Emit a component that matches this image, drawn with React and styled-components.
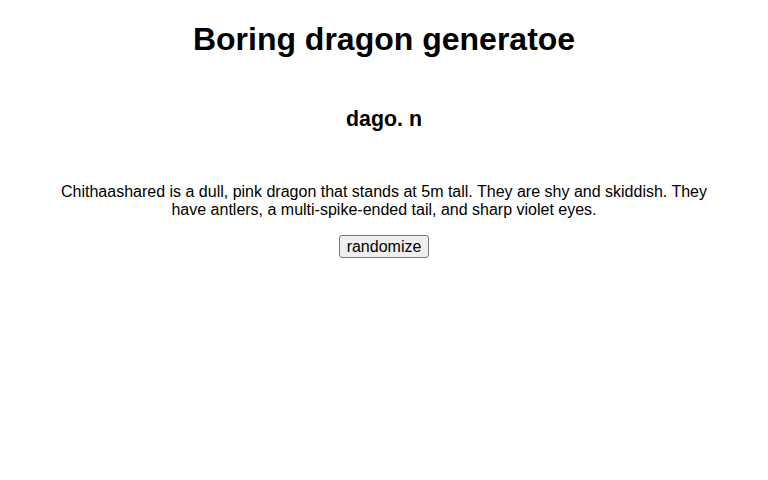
import styled, { createGlobalStyle } from "styled-components";

const GlobalStyle = createGlobalStyle`
  body {
    margin: 0;
    background: #ffffff;
    font-family: "Liberation Sans", Arial, sans-serif;
    color: #000000;
  }
`;

const Page = styled.main`
  padding: 0 8px;
  text-align: center;
`;

const Title = styled.h1`
  font-size: 32px;
  font-weight: bold;
  margin: 21px 0 0;
`;

const Name = styled.h2`
  font-size: 21.33px;
  font-weight: bold;
  margin: 49px 0 0;
`;

const Description = styled.p`
  font-size: 16px;
  line-height: 18px;
  margin: 51px 52px 16px;
`;

const Button = styled.button`
  font-family: "Liberation Sans", Arial, sans-serif;
  font-size: 16px;
  padding: 2px 7px 1px;
  color: #000;
  background: #efefef;
  border: 1px solid #767676;
  border-radius: 3px;
`;

function App() {
  return (
    <Page>
      <GlobalStyle />
      <Title>Boring dragon generatoe</Title>
      <Name>dago. n</Name>
      <Description>
        Chithaashared is a dull, pink dragon that stands at 5m tall. They are
        shy and skiddish. They have antlers, a multi-spike-ended tail, and
        sharp violet eyes.
      </Description>
      <Button>randomize</Button>
    </Page>
  );
}

export default App;
